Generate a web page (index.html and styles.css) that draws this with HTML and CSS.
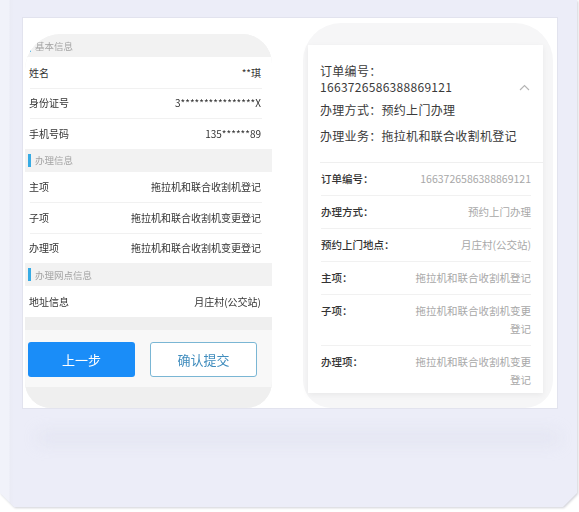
FILE: index.html
```html
<!DOCTYPE html>
<html lang="zh-CN">
<head>
  <meta charset="UTF-8" />
  <title>预约上门办理 - 订单确认</title>
  <link rel="stylesheet" href="styles.css">
</head>
<body>

<div class="frame-shadow">
  <div class="frame">
    <div class="panel">

      <!-- 左侧：信息确认页 -->
      <div class="phone">
        <div class="group-title">基本信息</div>
        <div class="row"><span class="label">姓名</span><span class="value">**琪</span></div>
        <div class="row"><span class="label">身份证号</span><span class="value">3****************X</span></div>
        <div class="row"><span class="label">手机号码</span><span class="value">135******89</span></div>

        <div class="group-title">办理信息</div>
        <div class="row"><span class="label">主项</span><span class="value">拖拉机和联合收割机登记</span></div>
        <div class="row"><span class="label">子项</span><span class="value">拖拉机和联合收割机变更登记</span></div>
        <div class="row"><span class="label">办理项</span><span class="value">拖拉机和联合收割机变更登记</span></div>

        <div class="group-title">办理网点信息</div>
        <div class="row"><span class="label">地址信息</span><span class="value">月庄村(公交站)</span></div>

        <div class="phone-foot">
          <div class="foot-bar">
            <button class="btn btn-primary">上一步</button>
            <button class="btn btn-outline">确认提交</button>
          </div>
        </div>
      </div>

      <!-- 右侧：订单详情 -->
      <div class="order-wrap">
        <div class="order-card">
          <div class="order-summary">
            <div class="summary-head">
              <p>订单编号：<br>1663726586388869121</p>
              <svg class="chevron" width="11" height="7" viewBox="0 0 11 7">
                <polyline points="1,6 5.5,1.5 10,6" fill="none" stroke="#b4b4b4" stroke-width="1.1"/>
              </svg>
            </div>
            <p class="mode">办理方式：预约上门办理</p>
            <p class="biz">办理业务：拖拉机和联合收割机登记</p>
          </div>

          <dl class="order-detail">
            <div class="detail-row"><dt>订单编号：</dt><dd>1663726586388869121</dd></div>
            <div class="detail-row"><dt>办理方式：</dt><dd>预约上门办理</dd></div>
            <div class="detail-row"><dt>预约上门地点：</dt><dd>月庄村(公交站)</dd></div>
            <div class="detail-row"><dt>主项：</dt><dd>拖拉机和联合收割机登记</dd></div>
            <div class="detail-row"><dt>子项：</dt><dd>拖拉机和联合收割机变更登记</dd></div>
            <div class="detail-row"><dt>办理项：</dt><dd>拖拉机和联合收割机变更登记</dd></div>
          </dl>
        </div>
      </div>

    </div>
    <div class="floor-shadow"></div>
  </div>
</div>

</body>
</html>
```

FILE: styles.css
```css
* { margin: 0; padding: 0; box-sizing: border-box; }

html, body {
  width: 579px;
  height: 512px;
  background: #fff;
  font-family: "Noto Sans CJK SC", "Noto Sans", sans-serif;
  overflow: hidden;
}

.frame-shadow {
  width: 578px;
  filter: drop-shadow(1px 1px 1px rgba(120, 122, 140, 0.35));
}

.frame {
  width: 577px;
  height: 507px;
  padding: 18px 0 0 23px;
  background: linear-gradient(to right, #f1f2fa 0, #f1f2fa 9px, #eaebf5 10px, #ecedf8 14px);
  clip-path: polygon(0 0, 100% 0, 100% 493px, calc(100% - 14px) 100%, 14px 100%, 0 493px);
}

.panel {
  width: 534px;
  height: 390px;
  background: #fff;
  box-shadow: 0 0 0 1px #e2e3ee;
  display: flex;
  align-items: flex-start;
  overflow: hidden;
}

/* ---------- left screen ---------- */

.phone {
  width: 247px;
  height: 374px;
  margin: 16px 0 0 2px;
  background: #f1f1f1;
  border-radius: 36px 30px 26px 26px;
  overflow: hidden;
  display: flex;
  flex-direction: column;
}

.group-title {
  height: 23px;
  background: #f2f2f2;
  display: flex;
  align-items: center;
  padding-left: 3px;
  font-size: 9.5px;
  color: #a3a3a3;
}

.group-title::before {
  content: "";
  width: 3px;
  height: 13px;
  margin-right: 4px;
  background: #37abe4;
}

.row {
  height: 30.5px;
  background: #fff;
  display: flex;
  justify-content: space-between;
  align-items: center;
  padding: 0 11px 0 4px;
  font-size: 10px;
  color: #333;
  position: relative;
}

.row + .row::before {
  content: "";
  position: absolute;
  top: 0;
  left: 5px;
  right: 10px;
  border-top: 1px solid #f1f1f1;
}

.phone-foot {
  flex: 1;
  padding-top: 13px;
  background: #efefef;
}

.foot-bar {
  height: 57px;
  background: #f8f8f8;
  display: flex;
  gap: 15px;
  padding: 12px 0 0 3px;
}

.btn {
  width: 107px;
  height: 35px;
  border-radius: 3px;
  font-family: inherit;
  font-size: 13px;
  cursor: pointer;
}

.btn-primary {
  background: #1a8df8;
  border: none;
  color: #fff;
}

.btn-outline {
  background: #fff;
  border: 1px solid #7ab6d4;
  color: #3f8cbd;
}

/* ---------- right order card ---------- */

.order-wrap {
  width: 250px;
  height: 385px;
  margin: 5px 0 0 31px;
  padding: 22px 10px 0 5px;
  background: #f6f6f7;
  border-radius: 38px 38px 28px 28px;
}

.order-card {
  height: 348px;
  background: #fff;
  box-shadow: 0 2px 6px rgba(0, 0, 0, 0.06);
}

.order-summary {
  margin-left: 12px;
  padding: 18px 0 18px;
  border-bottom: 1px solid #efefef;
  font-size: 12px;
  line-height: 16px;
  color: #3a3a3a;
  letter-spacing: 0.3px;
}

.summary-head {
  display: flex;
  justify-content: space-between;
  align-items: flex-end;
  padding-right: 13px;
}

.chevron {
  margin-bottom: 4px;
}

.order-summary .mode {
  margin-top: 7px;
}

.order-summary .biz {
  margin-top: 10px;
}

.order-detail {
  padding: 0 12px 0 13px;
}

.detail-row {
  display: flex;
  justify-content: space-between;
  padding: 7px 0;
  line-height: 18px;
  font-size: 10.5px;
  border-bottom: 1px solid #f1f1f1;
}

.detail-row:last-child {
  border-bottom: none;
}

.detail-row dt {
  color: #333;
  font-weight: 500;
  white-space: nowrap;
}

.detail-row dd {
  max-width: 118px;
  color: #a8a8a8;
  text-align: right;
}

/* soft shadow under the panel */
.floor-shadow {
  width: 520px;
  height: 12px;
  margin: 24px 0 0 15px;
  background: rgba(205, 207, 225, 0.3);
  filter: blur(8px);
}
```
